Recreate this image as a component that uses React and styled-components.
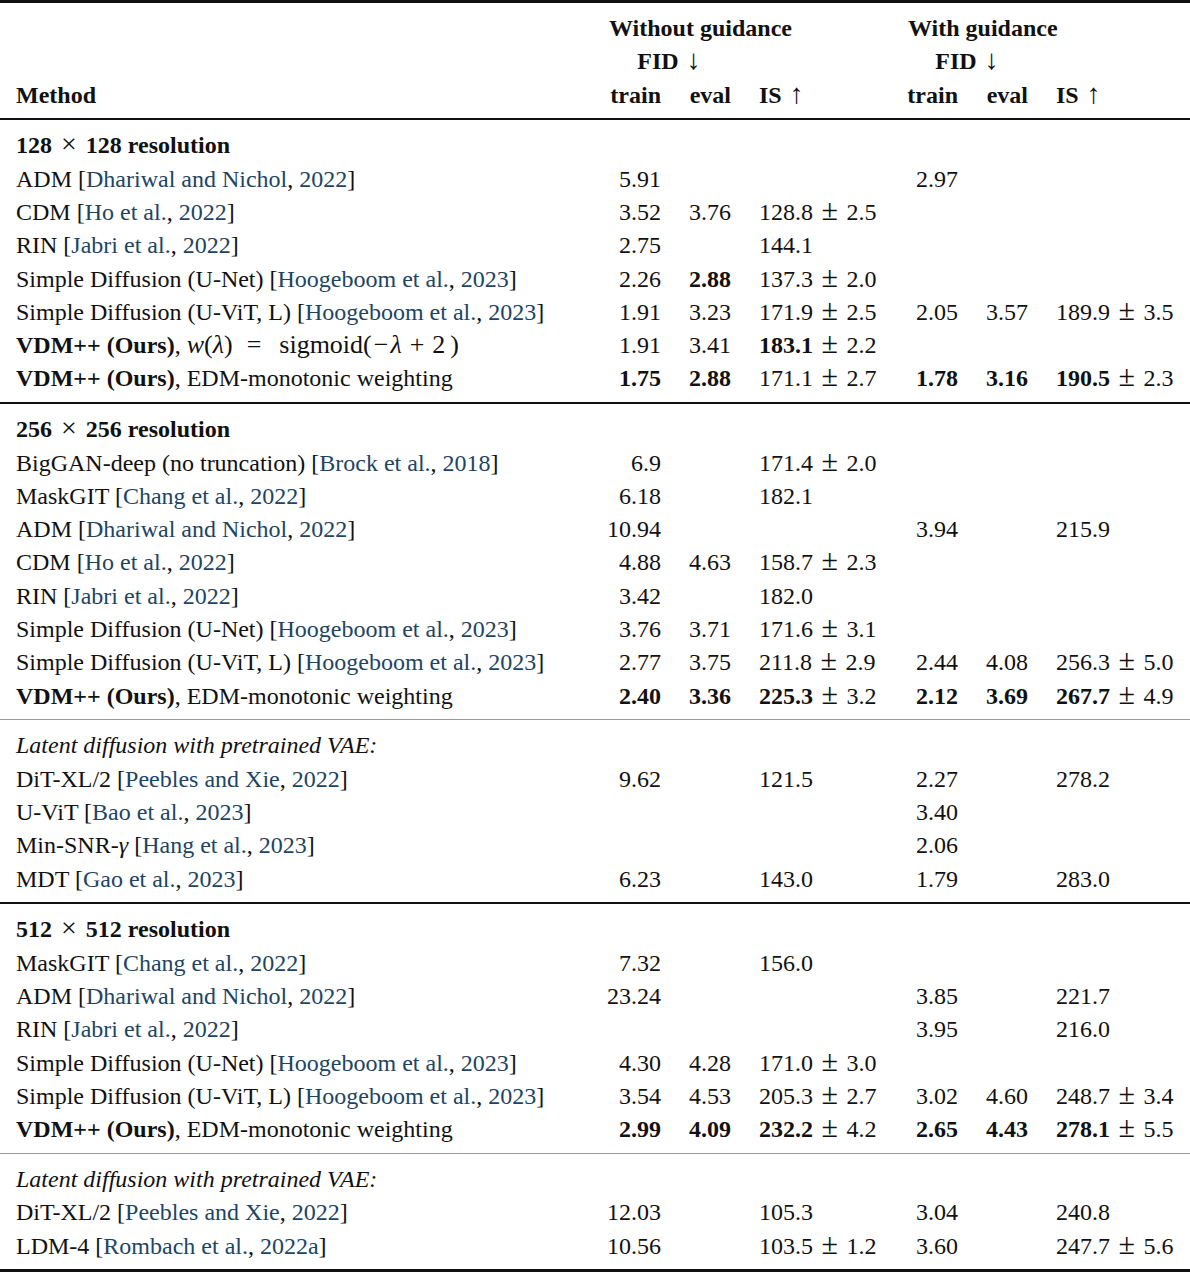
import React from "react";
import styled, { createGlobalStyle } from "styled-components";

const GlobalStyle = createGlobalStyle`
  html, body {
    margin: 0;
    padding: 0;
    background: #fff;
  }
  body {
    font-family: "Liberation Serif", "Times New Roman", serif;
    font-size: 24px;
    color: #111;
  }
`;

const Table = styled.div`
  width: 1190px;
  display: flex;
  flex-direction: column;
`;

const Group = styled.div`
  display: flex;
  flex-direction: column;
  padding: 8px 0 7.5px;
`;

const Row = styled.div`
  display: grid;
  grid-template-columns: 596px 65px 70px 175px 52px 70px 1fr;
  height: 33.3px;
  white-space: nowrap;
  font-weight: ${props => (props.$head ? "bold" : "normal")};
`;

const Cell = styled.div`
  line-height: 35px;
  padding-left: ${props =>
    props.$kind === "method" ? "16px" : props.$kind === "is" ? "28px" : "0"};
  text-align: ${props => (props.$kind === "num" ? "right" : "left")};
`;

const HeadSpan = styled.div`
  grid-column: ${props => props.$from} / ${props => props.$to};
  padding-left: ${props => props.$pad}px;
  line-height: 35px;
  font-weight: bold;
`;

const FidHead = styled(HeadSpan)`
  text-align: center;
`;

const Arrow = styled.span`
  font-weight: normal;
  font-size: 28px;
  line-height: 0;
  padding-left: 2px;
`;

const Rule = styled.div`
  height: ${props =>
    props.$kind === "thick" ? "3px" : props.$kind === "mid" ? "2px" : "1px"};
  background: ${props => (props.$kind === "thin" ? "#9a9a9a" : "#111")};
`;

const Link = styled.span`
  color: #1d4563;
`;

const PlusMinus = styled.span`
  font-weight: normal;
  font-size: 30px;
  line-height: 0;
  padding: 0 8.5px;
`;

const Times = styled.span`
  font-weight: normal;
  font-size: 28px;
  line-height: 0;
  padding: 0 3px;
`;

const Formula = styled.span`
  font-size: 26px;
  line-height: 0;
`;

const Eq = styled.span`
  padding: 0 18px 0 14px;
`;

const Bin = styled.span`
  padding: 0 8px;
`;

const Minus = styled.span`
  padding: 0 2px;
`;

const Close = styled.span`
  padding-left: 5px;
`;

const MathVar = styled.span`
  font-style: italic;
`;

const Cite = ({ who, year }) => (
  <>
    [<Link>{who}</Link>, <Link>{year}</Link>]
  </>
);

const Pm = ({ v, e, bold }) => (
  <>
    {bold ? <b>{v}</b> : v}
    <PlusMinus>±</PlusMinus>
    {e}
  </>
);

const Ours = () => (
  <>
    <b>VDM++ (Ours)</b>,{" "}
  </>
);

const Res = ({ n }) => (
  <b>
    {n} <Times>×</Times> {n} resolution
  </b>
);

const groups = [
  {
    title: <Res n="128" />,
    rule: "mid",
    rows: [
      [<>ADM <Cite who="Dhariwal and Nichol" year="2022" /></>, "5.91", "", "", "2.97", "", ""],
      [<>CDM <Cite who="Ho et al." year="2022" /></>, "3.52", "3.76", <Pm v="128.8" e="2.5" />, "", "", ""],
      [<>RIN <Cite who="Jabri et al." year="2022" /></>, "2.75", "", "144.1", "", "", ""],
      [<>Simple Diffusion (U-Net) <Cite who="Hoogeboom et al." year="2023" /></>, "2.26", <b>2.88</b>, <Pm v="137.3" e="2.0" />, "", "", ""],
      [<>Simple Diffusion (U-ViT, L) <Cite who="Hoogeboom et al." year="2023" /></>, "1.91", "3.23", <Pm v="171.9" e="2.5" />, "2.05", "3.57", <Pm v="189.9" e="3.5" />],
      [
        <>
          <Ours />
          <Formula>
            <MathVar>w</MathVar>(<MathVar>λ</MathVar>)<Eq>=</Eq>sigmoid(
            <Minus>−</Minus>
            <MathVar>λ</MathVar>
            <Bin>+</Bin>2<Close>)</Close>
          </Formula>
        </>,
        "1.91", "3.41", <Pm v="183.1" e="2.2" bold />, "", "", "",
      ],
      [<><Ours />EDM-monotonic weighting</>, <b>1.75</b>, <b>2.88</b>, <Pm v="171.1" e="2.7" />, <b>1.78</b>, <b>3.16</b>, <Pm v="190.5" e="2.3" bold />],
    ],
  },
  {
    title: <Res n="256" />,
    rule: "thin",
    rows: [
      [<>BigGAN-deep (no truncation) <Cite who="Brock et al." year="2018" /></>, "6.9", "", <Pm v="171.4" e="2.0" />, "", "", ""],
      [<>MaskGIT <Cite who="Chang et al." year="2022" /></>, "6.18", "", "182.1", "", "", ""],
      [<>ADM <Cite who="Dhariwal and Nichol" year="2022" /></>, "10.94", "", "", "3.94", "", "215.9"],
      [<>CDM <Cite who="Ho et al." year="2022" /></>, "4.88", "4.63", <Pm v="158.7" e="2.3" />, "", "", ""],
      [<>RIN <Cite who="Jabri et al." year="2022" /></>, "3.42", "", "182.0", "", "", ""],
      [<>Simple Diffusion (U-Net) <Cite who="Hoogeboom et al." year="2023" /></>, "3.76", "3.71", <Pm v="171.6" e="3.1" />, "", "", ""],
      [<>Simple Diffusion (U-ViT, L) <Cite who="Hoogeboom et al." year="2023" /></>, "2.77", "3.75", <Pm v="211.8" e="2.9" />, "2.44", "4.08", <Pm v="256.3" e="5.0" />],
      [<><Ours />EDM-monotonic weighting</>, <b>2.40</b>, <b>3.36</b>, <Pm v="225.3" e="3.2" bold />, <b>2.12</b>, <b>3.69</b>, <Pm v="267.7" e="4.9" bold />],
    ],
  },
  {
    title: <i>Latent diffusion with pretrained VAE:</i>,
    rule: "mid",
    rows: [
      [<>DiT-XL/2 <Cite who="Peebles and Xie" year="2022" /></>, "9.62", "", "121.5", "2.27", "", "278.2"],
      [<>U-ViT <Cite who="Bao et al." year="2023" /></>, "", "", "", "3.40", "", ""],
      [<>Min-SNR-<MathVar>γ</MathVar> <Cite who="Hang et al." year="2023" /></>, "", "", "", "2.06", "", ""],
      [<>MDT <Cite who="Gao et al." year="2023" /></>, "6.23", "", "143.0", "1.79", "", "283.0"],
    ],
  },
  {
    title: <Res n="512" />,
    rule: "thin",
    rows: [
      [<>MaskGIT <Cite who="Chang et al." year="2022" /></>, "7.32", "", "156.0", "", "", ""],
      [<>ADM <Cite who="Dhariwal and Nichol" year="2022" /></>, "23.24", "", "", "3.85", "", "221.7"],
      [<>RIN <Cite who="Jabri et al." year="2022" /></>, "", "", "", "3.95", "", "216.0"],
      [<>Simple Diffusion (U-Net) <Cite who="Hoogeboom et al." year="2023" /></>, "4.30", "4.28", <Pm v="171.0" e="3.0" />, "", "", ""],
      [<>Simple Diffusion (U-ViT, L) <Cite who="Hoogeboom et al." year="2023" /></>, "3.54", "4.53", <Pm v="205.3" e="2.7" />, "3.02", "4.60", <Pm v="248.7" e="3.4" />],
      [<><Ours />EDM-monotonic weighting</>, <b>2.99</b>, <b>4.09</b>, <Pm v="232.2" e="4.2" bold />, <b>2.65</b>, <b>4.43</b>, <Pm v="278.1" e="5.5" bold />],
    ],
  },
  {
    title: <i>Latent diffusion with pretrained VAE:</i>,
    rule: "thick",
    rows: [
      [<>DiT-XL/2 <Cite who="Peebles and Xie" year="2022" /></>, "12.03", "", "105.3", "3.04", "", "240.8"],
      [<>LDM-4 <Cite who="Rombach et al." year="2022a" /></>, "10.56", "", <Pm v="103.5" e="1.2" />, "3.60", "", <Pm v="247.7" e="5.6" />],
    ],
  },
];

const kinds = ["method", "num", "num", "is", "num", "num", "is"];

export default function App() {
  return (
    <>
      <GlobalStyle />
      <Table>
        <Rule $kind="thick" />
        <Group>
          <Row>
            <Cell />
            <HeadSpan $from={2} $to={5} $pad={13}>
              Without guidance
            </HeadSpan>
            <HeadSpan $from={5} $to={8} $pad={2}>
              With guidance
            </HeadSpan>
          </Row>
          <Row>
            <Cell />
            <FidHead $from={2} $to={4} $pad={11}>
              FID <Arrow>↓</Arrow>
            </FidHead>
            <Cell />
            <FidHead $from={5} $to={7} $pad={0}>
              FID <Arrow>↓</Arrow>
            </FidHead>
            <Cell />
          </Row>
          <Row $head>
            <Cell $kind="method">Method</Cell>
            <Cell $kind="num">train</Cell>
            <Cell $kind="num">eval</Cell>
            <Cell $kind="is">
              IS <Arrow>↑</Arrow>
            </Cell>
            <Cell $kind="num">train</Cell>
            <Cell $kind="num">eval</Cell>
            <Cell $kind="is">
              IS <Arrow>↑</Arrow>
            </Cell>
          </Row>
        </Group>
        <Rule $kind="mid" />
        {groups.map((g, gi) => (
          <React.Fragment key={gi}>
            <Group>
              <Row>
                <Cell $kind="method">{g.title}</Cell>
              </Row>
              {g.rows.map((r, ri) => (
                <Row key={ri}>
                  {r.map((c, ci) => (
                    <Cell key={ci} $kind={kinds[ci]}>
                      {c}
                    </Cell>
                  ))}
                </Row>
              ))}
            </Group>
            <Rule $kind={g.rule} />
          </React.Fragment>
        ))}
      </Table>
    </>
  );
}
